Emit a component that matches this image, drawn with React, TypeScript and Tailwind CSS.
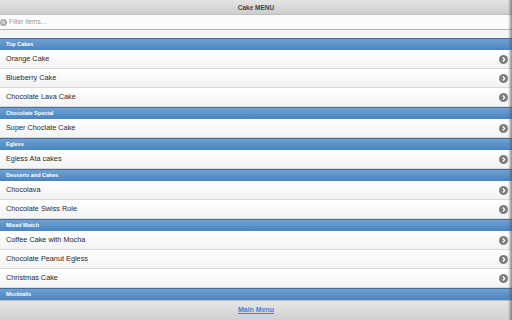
import React from "react";

type Section = { title: string; items: string[] };

const sections: Section[] = [
  { title: "Top Cakes", items: ["Orange Cake", "Blueberry Cake", "Chocolate Lava Cake"] },
  { title: "Chocolate Special", items: ["Super Choclate Cake"] },
  { title: "Egless", items: ["Egless Ata cakes"] },
  { title: "Desserts and Cakes", items: ["Chocolava", "Chocolate Swiss Role"] },
  {
    title: "Mixed Match",
    items: ["Coffee Cake with Mocha", "Chocolate Peanut Egless", "Christmas Cake"],
  },
  { title: "Mocktails", items: [] },
];

const ArrowIcon = () => (
  <svg width="9" height="9" viewBox="0 0 18 18" className="shrink-0">
    <circle cx="9" cy="9" r="9" fill="#7d7d7d" />
    <path d="M7.5 5 L11.5 9 L7.5 13" stroke="#fff" strokeWidth="2.4" fill="none" />
  </svg>
);

const SearchIcon = () => (
  <svg width="7" height="7" viewBox="0 0 16 16" className="shrink-0">
    <circle cx="8" cy="8" r="8" fill="#a5a5a5" />
    <circle cx="7" cy="7" r="3" stroke="#fff" strokeWidth="1.6" fill="none" />
    <path d="M9.2 9.2 L12 12" stroke="#fff" strokeWidth="1.8" />
  </svg>
);

export default function App() {
  return (
    <div
      className="relative flex h-[320px] w-[512px] flex-col overflow-hidden bg-[#f3f3f3]"
      style={{ fontFamily: '"Liberation Sans", Arial, sans-serif' }}
    >
      {/* header */}
      <div className="flex h-[15px] shrink-0 items-center justify-center border-b border-[#bdbdbd] bg-gradient-to-b from-[#e4e4e4] to-[#cdcdcd] pt-[1px]">
        <span className="text-[6.5px] font-bold text-[#444]">Cake MENU</span>
      </div>

      {/* filter */}
      <div className="flex h-[15px] shrink-0 items-center gap-[2px] border-b border-[#b5b5b5] bg-[#fcfcfc] pl-0">
        <SearchIcon />
        <span className="text-[6.5px] text-[#9a9a9a]">Filter items...</span>
      </div>

      <div className="h-[8px] shrink-0 bg-[#f4f6f8]" />

      {/* list */}
      <div className="flex shrink-0 flex-col">
        {sections.map((s) => (
          <React.Fragment key={s.title}>
            <div className="flex h-[12px] shrink-0 items-center border-t border-[#456f9a] bg-gradient-to-b from-[#6fa1d2] to-[#4a84bf] px-[6px]">
              <span className="text-[5.5px] font-bold text-white">{s.title}</span>
            </div>
            {s.items.map((item) => (
              <div
                key={item}
                className="flex h-[19px] shrink-0 items-center justify-between border-b border-[#d8d8d8] bg-gradient-to-b from-[#ffffff] to-[#f3f3f3] pl-[6px] pr-[4px] pt-[1px]"
              >
                <span className="text-[7.3px] text-[#2a2a2a]">{item}</span>
                <ArrowIcon />
              </div>
            ))}
          </React.Fragment>
        ))}
      </div>

      {/* footer */}
      <div className="absolute bottom-0 left-0 flex h-[20px] w-full items-center justify-center border-t border-[#bdbdbd] bg-gradient-to-b from-[#e6e6e6] to-[#d0d0d0]">
        <a className="text-[7px] font-bold text-[#3b86d4] underline" href="#">
          Main Menu
        </a>
      </div>

      {/* right edge shadow */}
      <div className="pointer-events-none absolute right-0 top-0 h-full w-[4px] bg-gradient-to-r from-transparent to-[#5a5a5a] opacity-70" />
    </div>
  );
}
